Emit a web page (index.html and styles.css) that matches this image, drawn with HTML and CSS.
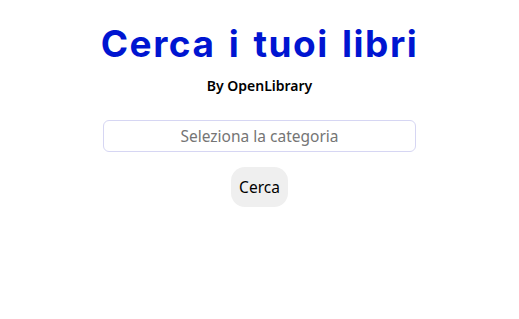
FILE: index.html
```html
<!DOCTYPE html>
<html lang="it">
<head>
<meta charset="utf-8">
<link rel="stylesheet" href="styles.css">
</head>
<body>
<main class="app">
  <h1 class="title">Cerca i tuoi libri</h1>
  <p class="subtitle">By OpenLibrary</p>
  <input class="search" type="text" placeholder="Seleziona la categoria">
  <button class="btn" type="button">Cerca</button>
</main>
</body>
</html>
```

FILE: styles.css
```css
html, body {
  margin: 0;
  padding: 0;
  background: #ffffff;
}
body {
  font-family: "Noto Sans", "Open Sans", sans-serif;
}
.app {
  width: 313px;
  margin: 0 auto;
  display: flex;
  flex-direction: column;
  align-items: center;
  padding-top: 22px;
}
.title {
  margin: 0;
  font-family: "Inter", "Open Sans", sans-serif;
  font-weight: 700;
  font-size: 37px;
  line-height: 44px;
  color: #0015d1;
  letter-spacing: 1.5px;
  word-spacing: 3px;
  white-space: nowrap;
}
.subtitle {
  margin: 10px 0 0;
  font-size: 14px;
  font-weight: 600;
  line-height: 20px;
  color: #000;
}
.search {
  box-sizing: border-box;
  margin-top: 24px;
  width: 313px;
  height: 32px;
  border: 1px solid #d6d6f3;
  border-radius: 6px;
  text-align: center;
  font-family: "Noto Sans", sans-serif;
  font-size: 15.5px;
  color: #333;
  outline: none;
}
.search::placeholder {
  color: #757575;
}
.btn {
  margin-top: 15px;
  height: 40px;
  padding: 0 8px;
  border: none;
  border-radius: 14px;
  background: #efefef;
  font-family: "Noto Sans", sans-serif;
  font-size: 15.5px;
  color: #000;
}
```
